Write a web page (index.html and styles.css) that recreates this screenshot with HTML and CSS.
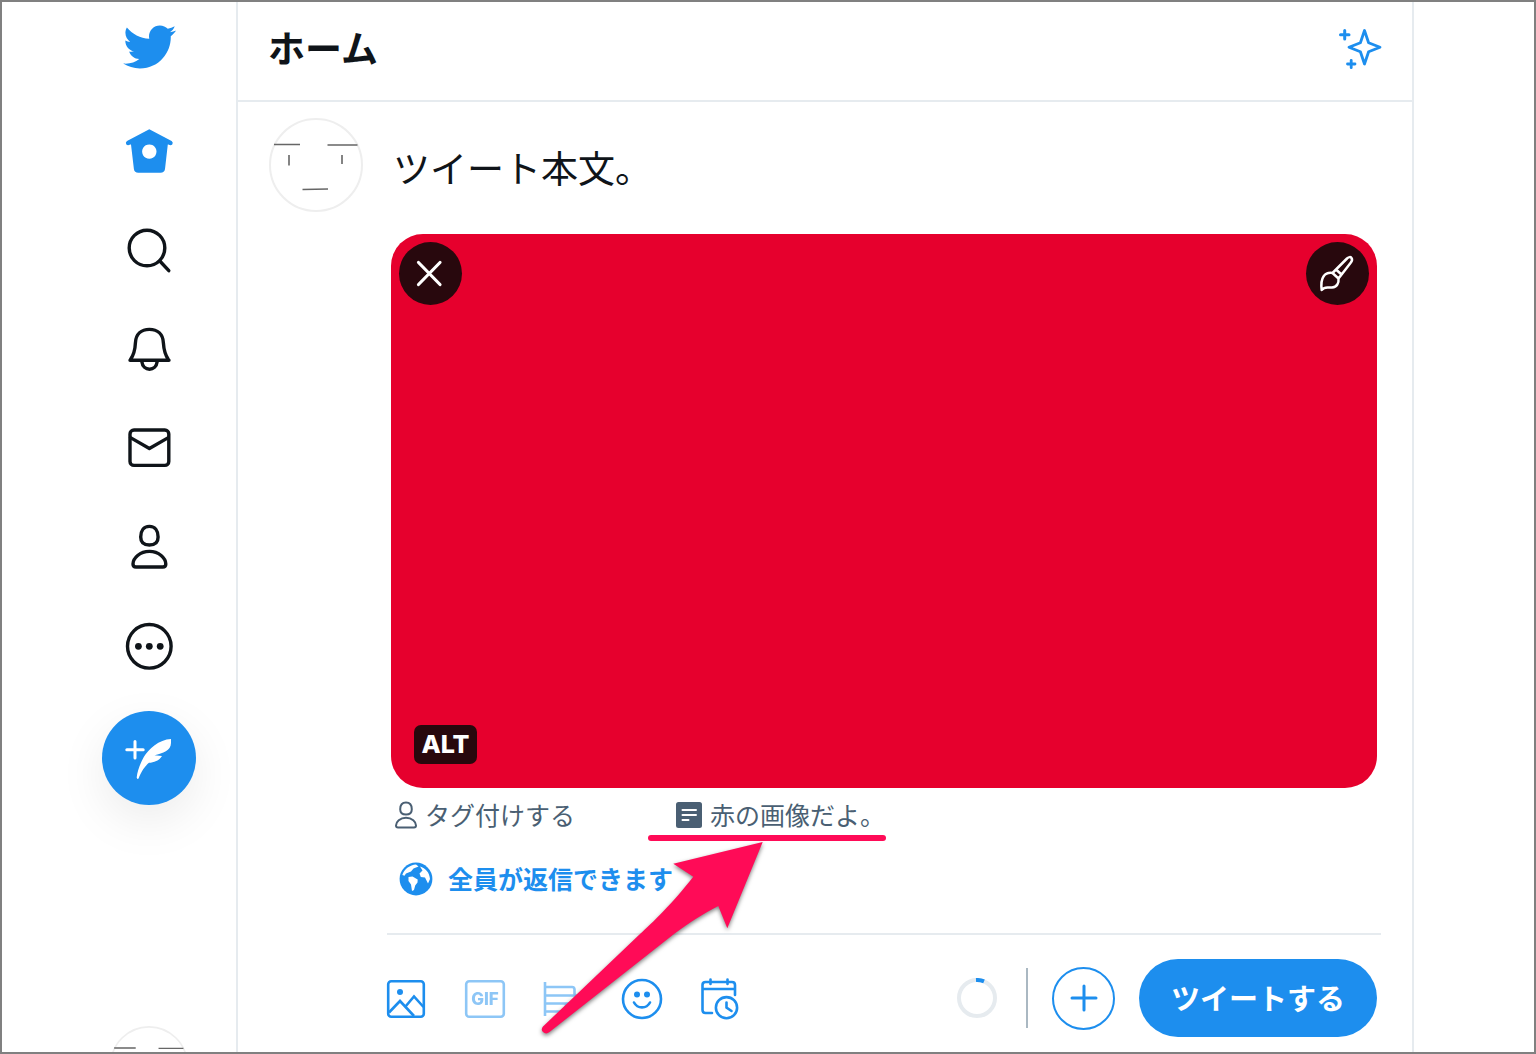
FILE: index.html
```html
<!DOCTYPE html>
<html lang="ja">
<head>
<meta charset="utf-8">
<meta name="viewport" content="width=device-width, initial-scale=1">
<title>ホーム</title>
<link rel="stylesheet" href="styles.css">
</head>
<body>
<div class="frame">
  <header class="sidebar">
    <a class="logo" href="#" aria-label="Twitter">
      <svg class="nav-icon solid" viewBox="0 0 24 24"><path d="M23.643 4.937c-.835.37-1.732.62-2.675.733.962-.576 1.7-1.49 2.048-2.578-.9.534-1.897.922-2.958 1.13-.85-.904-2.06-1.47-3.4-1.47-2.572 0-4.658 2.086-4.658 4.66 0 .364.042.718.12 1.06-3.873-.195-7.304-2.05-9.602-4.868-.4.69-.63 1.49-.63 2.342 0 1.616.823 3.043 2.072 3.878-.764-.025-1.482-.234-2.11-.583v.06c0 2.257 1.605 4.14 3.737 4.568-.392.106-.803.162-1.227.162-.3 0-.593-.028-.877-.082.593 1.85 2.313 3.198 4.352 3.234-1.595 1.25-3.604 1.995-5.786 1.995-.376 0-.747-.022-1.112-.065 2.062 1.323 4.51 2.093 7.14 2.093 8.57 0 13.255-7.098 13.255-13.254 0-.2-.005-.402-.014-.602.91-.658 1.7-1.477 2.323-2.41z"/></svg>
    </a>
    <nav class="nav">
      <a class="nav-link nav-link-active" href="#" aria-label="ホーム">
        <svg class="nav-icon solid" viewBox="0 0 56 56"><path fill-rule="evenodd" d="M28.3 6.2L50.6 18Q52.4 19.3 51.4 21.3Q50 23 47.4 21.6L46.8 21.6L44 46Q43.4 49.8 39.5 49.8H17.3Q13.4 49.8 12.9 46L10 21.6L9.2 21.6Q6.5 23 5.2 21.3Q4.2 19.3 6 18ZM28.3 21.4a7.2 7.2 0 1 0 .01 0Z"/></svg>
      </a>
      <a class="nav-link" href="#" aria-label="検索">
        <svg class="nav-icon line" viewBox="0 0 56 56"><circle cx="26" cy="26" r="17.8"/><path d="M38.8 39L47.8 48.7"/></svg>
      </a>
      <a class="nav-link" href="#" aria-label="通知">
        <svg class="nav-icon line" viewBox="0 0 56 56"><path d="M9 39.3H48M9.4 38.7Q14 32 14.4 22C14.8 13 20.5 8.4 28.4 8.4S42 13 42.4 22Q43 32 47.4 38.7M20.8 40.5C22 50.8 35 50.8 36.2 40.5"/></svg>
      </a>
      <a class="nav-link" href="#" aria-label="メッセージ">
        <svg class="nav-icon line" viewBox="0 0 56 56"><rect x="9" y="10" width="38.8" height="35.4" rx="4"/><path d="M9.5 17.6L28.4 28.5L47.3 17.6"/></svg>
      </a>
      <a class="nav-link" href="#" aria-label="プロフィール">
        <svg class="nav-icon line" viewBox="0 0 56 56"><path d="M28.4 7.4C22.5 7.4 19.7 12 19.7 18C19.7 23.5 22.5 26 28.4 26S37.1 23.5 37.1 18C37.1 12 34.3 7.4 28.4 7.4ZM28.4 32.4C19 32.4 12 39 12 45Q12 48 15 48H41.8Q44.8 48 44.8 45C44.8 39 37.8 32.4 28.4 32.4Z"/></svg>
      </a>
      <a class="nav-link" href="#" aria-label="もっと見る">
        <svg class="nav-icon line" viewBox="0 0 56 56"><circle cx="28.3" cy="28.3" r="21.8"/><g fill="currentColor" stroke="none"><circle cx="17.4" cy="28.3" r="3.4"/><circle cx="28.3" cy="28.3" r="3.4"/><circle cx="39.2" cy="28.3" r="3.4"/></g></svg>
      </a>
    </nav>
    <button class="compose" type="button" aria-label="ツイートを作成">
      <svg class="compose-icon" viewBox="0 0 94 94"><path d="M24.8 38.7H41.2M33 30.5V46.9" stroke="#fff" stroke-width="3" stroke-linecap="round"/><path fill="#fff" d="M69 28C57 28.500 46.500 38 41.800 46C38 53 35.300 60 34.700 66.500Q35 68.800 36.600 67.500C39 61 43 55 47 51.800C51.500 51.800 57.500 49.500 60 45L52.500 44.300C61 42 68.800 40 69 32Z"/></svg>
    </button>
    <a class="account" href="#" aria-label="アカウント">
      <svg class="avatar avatar-small" viewBox="0 0 94 94"><circle cx="47" cy="47" r="46"/><path d="M5 26.500H31M58.500 27H88.500M20 37V47.500M73 37V46M33.500 71.500L59 71"/></svg>
    </a>
  </header>

  <main class="main">
    <div class="topbar">
      <h1 class="title">ホーム</h1>
      <button class="plain" type="button" aria-label="トップツイート">
        <svg class="sparkle-icon" viewBox="0 0 44 44"><path stroke-width="2.800" stroke-linejoin="round" d="M26.500 3.500L30.600 15.700L42 20.200L30.600 24.700L26.500 37L22.400 24.700L11 20.200L22.400 15.700Z"/><path stroke-width="3" stroke-linecap="round" d="M2.500 7.700H11M6.700 3.500V12"/><path stroke-width="2.800" stroke-linecap="round" d="M9.500 37H17M13.200 33.300V40.700"/></svg>
      </button>
    </div>

    <form class="composer">
      <svg class="avatar" viewBox="0 0 94 94"><circle cx="47" cy="47" r="46"/><path d="M5 26.500H31M58.500 27H88.500M20 37V47.500M73 37V46M33.500 71.500L59 71"/></svg>
      <div class="body">
        <textarea class="text" rows="1" aria-label="ツイート本文">ツイート本文。</textarea>

        <div class="media">
          <button class="media-button media-remove" type="button" aria-label="削除">
            <svg class="media-icon" viewBox="0 0 63 63"><path stroke-width="3.200" d="M19.500 20.500L41 42.500M41 20.500L19.500 42.500"/></svg>
          </button>
          <button class="media-button media-edit" type="button" aria-label="編集">
            <svg class="media-icon" viewBox="0 0 63 63"><path stroke-width="2.500" d="M26.500 31L41 16.500Q44 14 45.500 16Q47 18 44.500 21L32.500 36.500ZM30 27.500L35.500 32.500M26.500 31C19 30 14 35 15.700 48C19 44 21 46 26 45.500C31 45 33 41 32.500 36.500"/></svg>
          </button>
          <button class="alt-badge" type="button">ALT</button>
        </div>

        <div class="media-links">
          <a class="media-link" href="#">
            <svg class="tag-icon" viewBox="0 0 26 28"><path d="M15 1.500C11 1.500 9.200 4.500 9.200 8.300C9.200 12 11 13.600 15 13.600S20.800 12 20.800 8.300C20.800 4.500 19 1.500 15 1.500ZM15 16.800C9 16.800 5 21 5 24.500Q5 26.500 7 26.500H23Q25 26.500 25 24.500C25 21 21 16.800 15 16.800Z"/></svg>
            <span class="label">タグ付けする</span>
          </a>
          <a class="media-link" href="#">
            <svg class="alt-icon" viewBox="0 0 26 26"><rect width="26" height="26" rx="2.500" fill="currentColor"/><path stroke="#fff" stroke-width="2" stroke-linecap="round" d="M6.500 8H20M6.500 13H20M6.500 18H12.500"/></svg>
            <span class="label">赤の画像だよ。</span>
          </a>
          <svg class="pointer" viewBox="536 830 360 210"><path class="underline" d="M651 838H883"/><path class="arrow" d="M762.700 842L673.300 863.700L693.300 876.700C672 904 652 923 640 934L543 1026.500Q540.500 1029.500 543 1032Q546 1034.800 549.500 1032L674 934C690 922 703 914 718.300 906L727.300 928.300Z"/></svg>
        </div>

        <button class="plain reply" type="button">
          <svg class="globe" viewBox="0 0 34 34"><circle cx="17" cy="17" r="16.400" fill="currentColor"/><path fill="#fff" d="M3.300 13C5.500 7 11 3 17 2.600L19.500 4.500L14.500 6.500L12 9.500L7 11.500L5.500 13.800ZM9.500 15L13.500 14.500L18.700 17.500L18.500 20.500L16.200 23.500L15 28L13 29L12 22.500L9.500 19ZM21 4.500C26.500 6 30.500 10.500 31 17L29 21.500L26 15.500L21.800 15L20.500 11.500L23.500 8.500Z"/></svg>
          <span class="label">全員が返信できます</span>
        </button>

        <div class="toolbar">
          <div class="tools">
            <button class="plain" type="button" aria-label="画像"><svg class="tool" viewBox="0 0 42 42"><rect x="3.200" y="3.200" width="35.600" height="35.600" rx="3"/><path d="M4 34.500L15 23L29 38M20.500 28.500L29 18.500L38.500 29"/><circle class="dot" cx="15" cy="14" r="3"/></svg></button>
            <button class="plain" type="button" aria-label="GIF" disabled><svg class="tool" viewBox="0 0 42 42"><rect x="2.200" y="3.200" width="37.600" height="35.600" rx="3"/><text class="gif" x="21" y="27" text-anchor="middle">GIF</text></svg></button>
            <button class="plain" type="button" aria-label="投票" disabled><svg class="tool" viewBox="0 0 42 42"><path d="M3 4V38M3 9H30Q32.500 9 32.500 11.500V17.500M3 17.500H38V25.500H3M3 33.500H24V25.500"/></svg></button>
            <button class="plain" type="button" aria-label="絵文字"><svg class="tool" viewBox="0 0 42 42"><circle cx="21" cy="21" r="19"/><path stroke-linecap="round" d="M13 24.500C16.500 31 25.500 31 29 24.500"/><circle class="dot" cx="16" cy="16.500" r="3"/><circle class="dot" cx="26" cy="16.500" r="3"/></svg></button>
            <button class="plain" type="button" aria-label="予約"><svg class="tool" viewBox="0 0 42 42"><path stroke-linecap="round" d="M13 35H6.500Q3.500 35 3.500 32V7Q3.500 4 6.500 4H33Q36 4 36 7V17M3.500 11H36M11.500 1.500V6M28.500 1.500V6M27.500 24.500V29.500L32.500 33"/><circle cx="27.500" cy="29.700" r="10.600"/></svg></button>
          </div>
          <div class="actions">
            <svg class="progress" viewBox="0 0 40 40"><circle cx="20" cy="20" r="18"/><path d="M19 2A18 18 0 0 1 27 3.400"/></svg>
            <span class="divider"></span>
            <button class="add" type="button" aria-label="追加"><svg class="add-icon" viewBox="0 0 30 30"><path d="M3 15H27M15 3V27"/></svg></button>
            <button class="submit" type="submit"><span class="label">ツイートする</span></button>
          </div>
        </div>
      </div>
    </form>
  </main>
</div>
</body>
</html>
```
FILE: styles.css
```css
:root {
  --blue: #1d8eee;
  --ink: #0f1419;
  --slate: #4a5f73;
  --rule: #e6ebef;
  --shade: #28080d;
  --pink: #ff0b57;
}

* {
  box-sizing: border-box;
}

body {
  margin: 0;
  background: #fff;
  color: var(--ink);
  font-family: "Noto Sans CJK JP", sans-serif;
}

svg {
  display: block;
  fill: none;
}

button {
  padding: 0;
  border: 0;
  font: inherit;
  cursor: pointer;
}

a {
  color: inherit;
  text-decoration: none;
}

.plain {
  background: none;
  color: var(--blue);
}

/* Lifts Japanese labels to the optical centre of their row */
.label {
  display: block;
  padding-bottom: 2px;
}

.frame {
  display: grid;
  grid-template-columns: 236px minmax(0, 1fr) 120px;
  min-height: 100vh;
  border: 2px solid #808080;
}

/* Sidebar */
.sidebar {
  display: flex;
  flex-direction: column;
  align-items: center;
  padding-left: 60px;
  border-right: 2px solid var(--rule);
}

.logo {
  display: flex;
  align-items: center;
  height: 90px;
  margin-bottom: 9px;
  color: var(--blue);
}

.nav-link {
  display: flex;
  align-items: center;
  height: 99px;
}

.nav-link-active {
  color: var(--blue);
}

.nav-icon {
  width: 56px;
  height: 56px;
}

.solid {
  fill: currentColor;
}

.line {
  stroke: currentColor;
  stroke-width: 3.4px;
  stroke-linecap: round;
  stroke-linejoin: round;
}

.compose {
  width: 94px;
  height: 94px;
  margin-top: 16px;
  border-radius: 50%;
  background: var(--blue);
  box-shadow: 0 16px 48px rgba(0, 0, 0, 0.08);
}

.compose-icon {
  width: 94px;
  height: 94px;
}

.account {
  height: 26px;
  margin-top: auto;
  overflow: hidden;
}

.avatar {
  flex: none;
  width: 94px;
  height: 94px;
  stroke: #666;
  stroke-width: 1.6px;
}

.avatar circle {
  stroke: #eee;
  stroke-width: 2px;
}

.avatar-small {
  width: 78px;
  height: 78px;
}

/* Main column */
.main {
  border-right: 2px solid var(--rule);
}

.topbar {
  display: flex;
  align-items: center;
  justify-content: space-between;
  height: 100px;
  padding: 0 30px 8px;
  border-bottom: 2px solid var(--rule);
}

.title {
  margin: 0;
  font-size: 37px;
  line-height: 52px;
}

.sparkle-icon {
  width: 44px;
  height: 44px;
  margin-top: 4px;
  stroke: currentColor;
}

.composer {
  display: flex;
  gap: 28px;
  padding: 16px 35px 15px 31px;
}

.body {
  flex: 1;
  min-width: 0;
}

.text {
  display: block;
  width: 100%;
  height: 100px;
  margin: 0 0 16px;
  padding: 23px 2px;
  border: 0;
  outline: 0;
  resize: none;
  overflow: hidden;
  background: none;
  color: inherit;
  font: 37px/52px "Noto Sans CJK JP", sans-serif;
}

.media {
  position: relative;
  aspect-ratio: 986 / 554;
  border-radius: 32px;
  background: #e6002d;
}

.media-button {
  position: absolute;
  top: 8px;
  width: 63px;
  height: 63px;
  border-radius: 50%;
  background: var(--shade);
}

.media-remove {
  left: 8px;
}

.media-edit {
  right: 8px;
}

.media-icon {
  width: 63px;
  height: 63px;
  stroke: #fff;
  stroke-linecap: round;
  stroke-linejoin: round;
}

.alt-badge {
  position: absolute;
  bottom: 24px;
  left: 23px;
  width: 63px;
  height: 39px;
  border-radius: 7px;
  background: var(--shade);
  color: #fff;
  font: 800 25px/39px Inter, sans-serif;
}

.media-links {
  position: relative;
  z-index: 1;
  display: flex;
  gap: 101px;
  height: 54px;
}

.media-link {
  display: flex;
  align-items: center;
  gap: 8px;
  color: var(--slate);
  font-size: 25px;
  line-height: 38px;
}

.tag-icon {
  width: 26px;
  height: 28px;
  stroke: currentColor;
  stroke-width: 2px;
}

.alt-icon {
  width: 26px;
  height: 26px;
}

.pointer {
  position: absolute;
  top: 42px;
  left: 145px;
  width: 360px;
  height: 210px;
  pointer-events: none;
}

.underline {
  stroke: var(--pink);
  stroke-width: 6px;
  stroke-linecap: round;
}

.arrow {
  fill: var(--pink);
  filter: drop-shadow(0 2px 2px rgba(0, 0, 0, 0.5));
}

.reply {
  display: flex;
  align-items: center;
  gap: 15px;
  height: 74px;
  padding-left: 8px;
  font-size: 25px;
  font-weight: 700;
  line-height: 38px;
}

.globe {
  width: 34px;
  height: 34px;
}

.toolbar {
  display: flex;
  align-items: center;
  justify-content: space-between;
  margin: 17px -4px 0;
  padding: 24px 4px 0 0;
  border-top: 2px solid var(--rule);
}

.tools {
  display: flex;
  justify-content: space-between;
  width: 356px;
  margin-left: -2px;
  padding-top: 2px;
}

.tools button:disabled {
  opacity: 0.5;
}

.tool {
  width: 42px;
  height: 42px;
  stroke: currentColor;
  stroke-width: 2.6px;
}

.dot,
.gif {
  fill: currentColor;
  stroke: none;
}

.gif {
  font: 800 17px Inter, sans-serif;
}

.actions {
  display: flex;
  align-items: center;
  gap: 24px;
}

.progress {
  width: 40px;
  height: 40px;
  margin-right: 5px;
  stroke: var(--rule);
  stroke-width: 4px;
}

.progress path {
  stroke: var(--blue);
}

.divider {
  width: 2px;
  height: 60px;
  background: #aab8c2;
}

.add {
  display: grid;
  place-items: center;
  width: 63px;
  height: 63px;
  border: 2px solid var(--blue);
  border-radius: 50%;
  background: #fff;
}

.add-icon {
  width: 30px;
  height: 30px;
  stroke: var(--blue);
  stroke-width: 3px;
  stroke-linecap: round;
}

.submit {
  width: 238px;
  height: 78px;
  border-radius: 39px;
  background: var(--blue);
  color: #fff;
  font-size: 29px;
  font-weight: 700;
  line-height: 42px;
}
```
